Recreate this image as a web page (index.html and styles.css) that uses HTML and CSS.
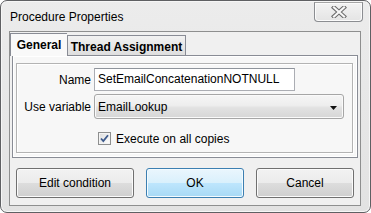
FILE: index.html
```html
<!DOCTYPE html>
<html>
<head>
<meta charset="utf-8">
<link rel="stylesheet" href="styles.css">
</head>
<body>
<div class="window">
  <div class="titlebar">
    <span class="title">Procedure Properties</span>
    <div class="close">
      <svg width="16" height="12" viewBox="0 0 16 12">
        <path d="M3 1.5 L13 10.5 M13 1.5 L3 10.5" stroke="#6a6a6a" stroke-width="4.2" stroke-linecap="square" fill="none"/>
        <path d="M3 1.5 L13 10.5 M13 1.5 L3 10.5" stroke="#f7f7f7" stroke-width="2.2" stroke-linecap="square" fill="none"/>
      </svg>
    </div>
  </div>
  <div class="client">
    <div class="tabs">
      <div class="tab tab-active">General</div>
      <div class="tab tab-idle">Thread Assignment</div>
    </div>
    <div class="tabpanel">
      <div class="group">
        <span class="lbl">Name</span>
        <div class="textfield">SetEmailConcatenationNOTNULL</div>
        <span class="lbl">Use variable</span>
        <div class="combo">
          <span>EmailLookup</span>
          <svg class="arrow" width="7" height="4" viewBox="0 0 7 4"><path d="M0 0 H7 L3.5 4 Z" fill="#111"/></svg>
        </div>
        <span></span>
        <div class="check">
          <span class="box">
            <svg width="11" height="11" viewBox="0 0 11 11"><path d="M2 5.5 L4.3 8 L9 2.2" stroke="#3d5a8c" stroke-width="1.8" fill="none"/></svg>
          </span>
          <span>Execute on all copies</span>
        </div>
      </div>
    </div>
    <div class="buttons">
      <div class="btn btn-wide">Edit condition</div>
      <div class="btn btn-default">OK</div>
      <div class="btn">Cancel</div>
    </div>
  </div>
</div>
</body>
</html>
```

FILE: styles.css
```css
* { box-sizing: border-box; }
html, body { margin: 0; padding: 0; background: #ffffff; }
body {
  font-family: "Liberation Sans", Arial, sans-serif;
  font-size: 12px;
  color: #000;
}
.window {
  width: 371px;
  height: 213px;
  border: 1px solid #5f6063;
  border-radius: 7px;
  background: linear-gradient(#ececec, #e2e2e2);
  box-shadow: inset 0 0 0 1px #f6f6f6;
  padding: 0 9px 6px 8px;
  display: flex;
  flex-direction: column;
}
.titlebar {
  height: 30px;
  display: flex;
  justify-content: space-between;
  align-items: flex-start;
  margin-right: -2px;
  padding-left: 1px;
}
.title {
  line-height: 14px;
  padding-top: 9px;
  color: #000;
}
.close {
  width: 49px;
  height: 20px;
  margin-top: 1px;
  border: 1px solid #8b8d91;
  border-top-color: #a5a5a5;
  border-radius: 0 0 4px 4px;
  background: linear-gradient(#f3f3f3, #e4e4e4);
  box-shadow: inset 0 0 0 1px #fbfbfb;
  display: flex;
  align-items: center;
  justify-content: center;
}
.client {
  flex: 1;
  border: 1px solid #8e8f8f;
  background: #f0f0f0;
  display: flex;
  flex-direction: column;
}
.tabs {
  height: 23px;
  display: flex;
  align-items: flex-end;
  padding-top: 1px;
}
.tab {
  font-weight: bold;
  line-height: 14px;
  padding-top: 4px;
  text-align: center;
  border: 1px solid #898c95;
  border-bottom: none;
  white-space: nowrap;
}
.tab-active {
  width: 57px;
  height: 23px;
  margin-bottom: -1px;
  position: relative;
  z-index: 1;
  background: #f9f9f9;
  border-right: none;
}
.tab-idle {
  width: 119px;
  height: 20px;
  background: linear-gradient(#f2f2f2, #dedede);
}
.tabpanel {
  margin: 0 2px 0 2px;
  height: 103px;
  border: 1px solid #898c95;
  background: #f7f7f7;
  box-shadow: inset 0 0 0 1px #ffffff;
  padding: 7px 4px 0 3px;
}
.group {
  height: 90px;
  border: 1px solid #b3b3b3;
  box-shadow: inset 1px 1px 0 #ffffff, 1px 1px 0 #ffffff;
  display: grid;
  grid-template-columns: 69px 250px;
  column-gap: 3px;
  row-gap: 3px;
  grid-template-rows: 23px 25px 24px;
  padding: 4px 0 0 5px;
  align-items: center;
}
.lbl {
  text-align: right;
  line-height: 14px;
  white-space: nowrap;
}
.textfield {
  width: 201px;
  height: 23px;
  border: 1px solid #abadb3;
  border-top-color: #8f949c;
  background: #ffffff;
  padding-left: 3px;
  line-height: 21px;
  white-space: nowrap;
}
.combo {
  height: 25px;
  border: 1px solid #a6a6a6;
  border-radius: 3px;
  background: linear-gradient(#f5f5f5 0%, #eeeeee 45%, #e2e2e2 55%, #d6d6d6 100%);
  box-shadow: inset 0 0 0 1px #fafafa;
  display: flex;
  align-items: center;
  justify-content: space-between;
  padding: 0 6px 0 3px;
}
.arrow { margin-top: 2px; }
.check {
  display: flex;
  align-items: center;
  padding-left: 4px;
  padding-top: 10px;
  line-height: 14px;
}
.box {
  width: 13px;
  height: 13px;
  border: 1px solid #8e8f8f;
  background: linear-gradient(135deg, #dcdcdc, #ffffff);
  box-shadow: inset 0 0 0 1px #f4f4f4;
  display: flex;
  align-items: center;
  justify-content: center;
  margin-right: 5px;
  margin-top: -1px;
}
.buttons {
  display: flex;
  gap: 12px;
  padding: 10px 0 0 6px;
}
.btn {
  width: 98px;
  height: 30px;
  border: 1px solid #707070;
  border-radius: 3px;
  background: linear-gradient(#f2f2f2 0%, #ebebeb 50%, #dddddd 50%, #cfcfcf 100%);
  box-shadow: inset 0 0 0 1px #fbfbfb;
  display: flex;
  align-items: center;
  justify-content: center;
  line-height: 14px;
}
.btn-wide { width: 118px; }
.btn-default {
  border-color: #3c7fb1;
  background: linear-gradient(#eaf6fd 0%, #d9f0fc 50%, #bee6fd 50%, #a7d9f5 100%);
  box-shadow: inset 0 0 0 1px #f4fbff;
}
```
